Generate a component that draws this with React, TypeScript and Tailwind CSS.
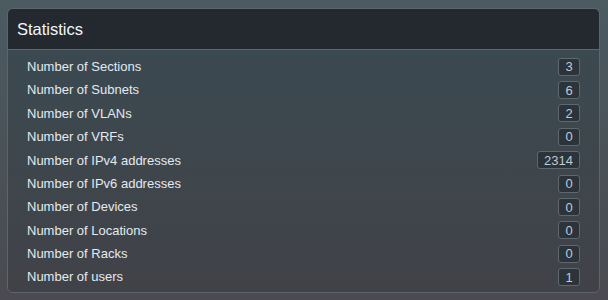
const stats: [string, number][] = [
  ['Number of Sections', 3],
  ['Number of Subnets', 6],
  ['Number of VLANs', 2],
  ['Number of VRFs', 0],
  ['Number of IPv4 addresses', 2314],
  ['Number of IPv6 addresses', 0],
  ['Number of Devices', 0],
  ['Number of Locations', 0],
  ['Number of Racks', 0],
  ['Number of users', 1],
];

export default function App() {
  return (
    <div
      className="w-[608px] h-[300px] overflow-hidden bg-gradient-to-b from-[#4c5a62] via-[#4a5258] to-[#4a4a50] pt-[8px] pl-[7px]"
      style={{ fontFamily: '"Liberation Sans", Arial, sans-serif' }}
    >
      <div className="w-[593px] h-[285px] rounded-[6px] border border-[#5a656d] overflow-hidden flex flex-col">
        <div className="h-[41px] shrink-0 bg-[#23292f] border-b border-[#5c666e] flex items-center pl-[9px]">
          <span className="text-[16.5px] text-[#f2f6fa]">Statistics</span>
        </div>
        <div className="flex-1 bg-gradient-to-b from-[#3b4951] via-[#3e464c] to-[#414248] pt-[5px] pl-[19px] pr-[19px]">
          {stats.map(([label, value]) => (
            <div key={label} className="h-[23.4px] flex items-center justify-between">
              <span className="text-[13px] text-[#e4eaf0]">{label}</span>
              <span className="h-[18px] min-w-[22px] px-[6px] rounded-[3px] border border-[#5e686f] bg-[#2c343a] text-[13px] leading-none text-[#bccadb] flex items-center justify-center">
                {value}
              </span>
            </div>
          ))}
        </div>
      </div>
    </div>
  );
}
